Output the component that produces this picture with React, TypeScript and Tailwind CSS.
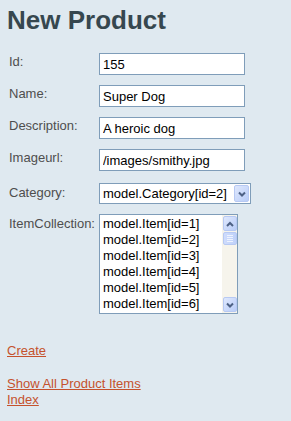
import React from "react";

const font = { fontFamily: '"Liberation Sans", Arial, sans-serif' };

function Chevron({ up = false }: { up?: boolean }) {
  return (
    <svg width="8" height="6" viewBox="0 0 8 6">
      <path
        d={up ? "M1 5 L4 2 L7 5" : "M1 1.5 L4 4.5 L7 1.5"}
        fill="none"
        stroke="#4d6185"
        strokeWidth="2"
      />
    </svg>
  );
}

function ScrollButton({ up = false }: { up?: boolean }) {
  return (
    <div className="flex h-[15px] w-[14px] items-center justify-center rounded-[2px] border border-[#b7c9f3] bg-gradient-to-br from-[#dfe8fd] to-[#b9cdf8]">
      <Chevron up={up} />
    </div>
  );
}

function TextRow({ label, value }: { label: string; value: string }) {
  return (
    <div className="flex">
      <div className="w-[90px] pt-[1px] text-[13px] leading-[16px] text-[#4e4e4e]">{label}</div>
      <input
        readOnly
        value={value}
        className="h-[22px] w-[146px] border border-[#7f9db9] bg-white px-[3px] text-[13px] text-black outline-none"
        style={font}
      />
    </div>
  );
}

const items = [1, 2, 3, 4, 5, 6];

export default function App() {
  return (
    <div className="min-h-[421px] w-[291px] bg-[#dfe9f0] pl-[7px] pt-[4px]" style={font}>
      <h1 className="text-[26px] font-bold leading-[32px] text-[#36474f]">New Product</h1>

      <div className="mt-[17px] flex flex-col gap-[10px] pl-[2px]">
        <TextRow label="Id:" value="155" />
        <TextRow label="Name:" value="Super Dog" />
        <TextRow label="Description:" value="A heroic dog" />
        <TextRow label="Imageurl:" value="/images/smithy.jpg" />

        <div className="mt-[2px] flex">
          <div className="w-[90px] pt-[2px] text-[13px] leading-[16px] text-[#4e4e4e]">Category:</div>
          <div className="flex h-[21px] w-[152px] items-center border border-[#7f9db9] bg-white pl-[3px] pr-[1px]">
            <span className="flex-1 text-[13px] text-black">model.Category[id=2]</span>
            <div className="flex h-[17px] w-[15px] items-center justify-center rounded-[2px] border border-[#b7c9f3] bg-gradient-to-br from-[#dfe8fd] to-[#b9cdf8]">
              <Chevron />
            </div>
          </div>
        </div>

        <div className="flex">
          <div className="w-[90px] pt-[2px] text-[13px] leading-[16px] text-[#4e4e4e]">ItemCollection:</div>
          <div className="flex h-[100px] w-[139px] border border-[#7f9db9] bg-white">
            <div className="flex-1 pl-[3px] pt-[1px]">
              {items.map((i) => (
                <div key={i} className="h-[16px] text-[13px] leading-[16px] text-black">
                  model.Item[id={i}]
                </div>
              ))}
            </div>
            <div className="flex w-[15px] flex-col items-center bg-[#f6f4ec] py-[1px]">
              <ScrollButton up />
              <div className="mt-[1px] flex h-[13px] w-[14px] flex-col items-center justify-center gap-[1px] rounded-[2px] border border-[#b7c9f3] bg-gradient-to-r from-[#cfdcfc] to-[#bfd1f9]">
                <div className="h-px w-[6px] bg-[#eef3fe]" />
                <div className="h-px w-[6px] bg-[#eef3fe]" />
                <div className="h-px w-[6px] bg-[#eef3fe]" />
                <div className="h-px w-[6px] bg-[#eef3fe]" />
              </div>
              <div className="flex-1" />
              <ScrollButton />
            </div>
          </div>
        </div>
      </div>

      <div className="mt-[29px] text-[13px] leading-[16px]">
        <a href="#" className="text-[#c5522d] underline">Create</a>
      </div>
      <div className="mt-[17px] flex flex-col text-[13px] leading-[16px]">
        <a href="#" className="self-start text-[#c5522d] underline">Show All Product Items</a>
        <a href="#" className="self-start text-[#c5522d] underline">Index</a>
      </div>
    </div>
  );
}
